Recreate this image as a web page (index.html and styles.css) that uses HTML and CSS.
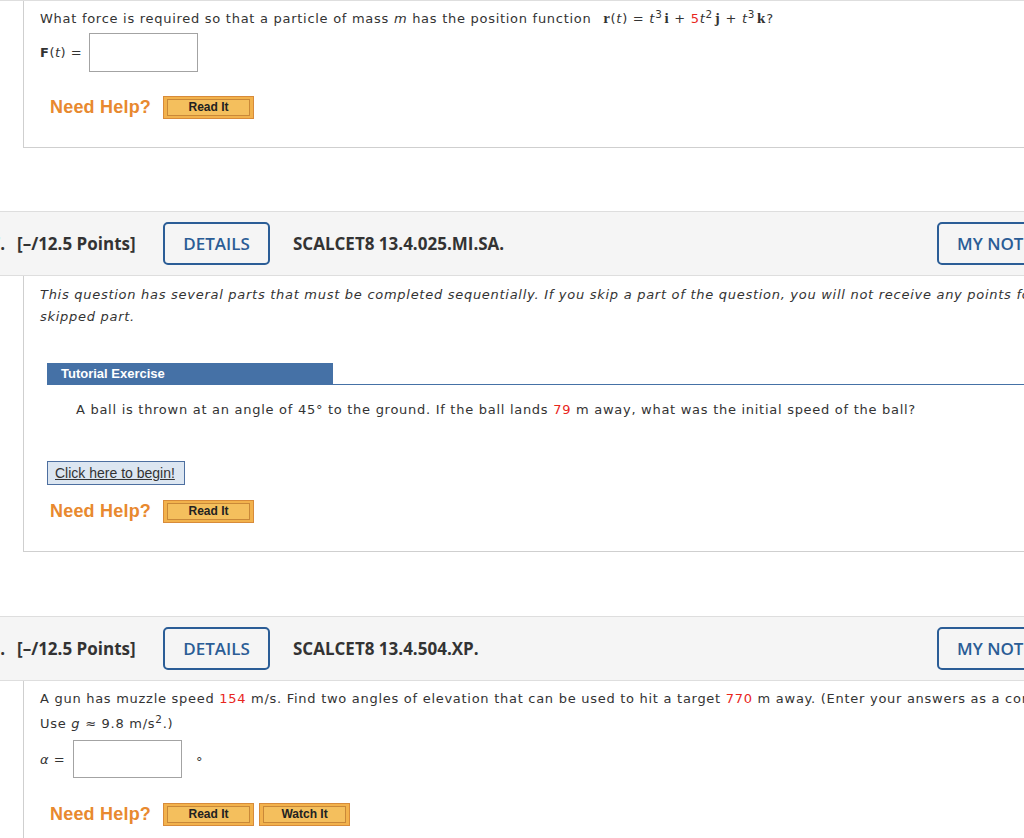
FILE: index.html
```html
<!DOCTYPE html>
<html lang="en">
<head>
  <meta charset="UTF-8">
  <meta name="viewport" content="width=device-width, initial-scale=1.0">
  <title>Assignment</title>
  <link rel="stylesheet" href="styles.css">
</head>
<body>
  <div class="page">
    <div class="prev-edge"></div>

    <div class="qbody first-body">
      <p class="qtext">What force is required so that a particle of mass <i>m</i> has the position function&nbsp; <b class="vec">r</b>(<i>t</i>) = <i>t</i><sup>3</sup><b class="vec">i</b> + <span class="red">5</span><i>t</i><sup>2</sup><b class="vec">j</b> + <i>t</i><sup>3</sup><b class="vec">k</b>?</p>
      <div class="answer-row">
        <span><b>F</b>(<i>t</i>) =</span>
        <input class="answer" type="text">
      </div>
      <div class="help-row">
        <span class="help-label">Need Help?</span>
        <button class="help-btn"><span>Read It</span></button>
      </div>
    </div>

    <div class="qhead">
      <span class="qnum">7.</span>
      <span class="points">[–/12.5 Points]</span>
      <button class="outline-btn details-btn">DETAILS</button>
      <span class="qcode">SCALCET8 13.4.025.MI.SA.</span>
      <button class="outline-btn notes-btn">MY NOTES</button>
    </div>
    <div class="qbody">
      <p class="qtext intro"><i>This question has several parts that must be completed sequentially. If you skip a part of the question, you will not receive any points for the<br>skipped part.</i></p>
      <div class="tut-head">
        <div class="tut-title">Tutorial Exercise</div>
      </div>
      <p class="qtext tut-text">A ball is thrown at an angle of 45° to the ground. If the ball lands <span class="red">79</span> m away, what was the initial speed of the ball?</p>
      <button class="begin-btn">Click here to begin!</button>
      <div class="help-row after-begin">
        <span class="help-label">Need Help?</span>
        <button class="help-btn"><span>Read It</span></button>
      </div>
    </div>

    <div class="qhead last-head">
      <span class="qnum">8.</span>
      <span class="points">[–/12.5 Points]</span>
      <button class="outline-btn details-btn">DETAILS</button>
      <span class="qcode">SCALCET8 13.4.504.XP.</span>
      <button class="outline-btn notes-btn">MY NOTES</button>
    </div>
    <div class="qbody">
      <p class="qtext two-line">A gun has muzzle speed <span class="red">154</span> m/s. Find two angles of elevation that can be used to hit a target <span class="red">770</span> m away. (Enter your answers as a comma-separated list.<br>Use <i>g</i> ≈ 9.8 m/s<sup>2</sup>.)</p>
      <div class="answer-row alpha-row">
        <span><i>α</i> =</span>
        <input class="answer" type="text">
        <span class="unit">°</span>
      </div>
      <div class="help-row after-alpha">
        <span class="help-label">Need Help?</span>
        <button class="help-btn"><span>Read It</span></button>
        <button class="help-btn"><span>Watch It</span></button>
      </div>
    </div>
  </div>
</body>
</html>
```

FILE: styles.css
```css
* {
  box-sizing: border-box;
}
body {
  margin: 0;
  overflow: hidden;
  background: #fff;
  color: #333;
  font-family: "DejaVu Sans", Verdana, sans-serif;
  font-size: 13px;
}
.page {
  width: 1100px;
}
.prev-edge {
  border-bottom: 1px solid #dedede;
}

/* question body */
.qbody {
  margin-left: 23px;
  padding: 0 0 28px 16px;
  border-left: 1px solid #cfcfcf;
  border-bottom: 1px solid #cfcfcf;
}
.qtext {
  margin: 0;
  line-height: 22px;
  letter-spacing: 0.72px;
  white-space: nowrap;
}
.first-body .qtext {
  padding-top: 6px;
}
.vec {
  margin-left: 2px;
  font-family: "Liberation Serif", "Times New Roman", serif;
  font-size: 15px;
}
sup {
  font-size: 0.8em;
  line-height: 0;
  vertical-align: 0.45em;
}
.red {
  color: #e8261c;
}

.answer-row {
  display: flex;
  align-items: center;
  gap: 7px;
  margin-top: 3px;
  letter-spacing: 0.5px;
}
.answer {
  width: 109px;
  height: 39px;
  margin: 0;
  border: 1px solid #a3a3a3;
  background: #fff;
}
.alpha-row {
  margin-top: 4px;
  gap: 8px;
}
.alpha-row .answer {
  height: 38px;
}
.unit {
  margin-left: 6px;
  padding-top: 4px;
}

.help-row {
  display: flex;
  align-items: center;
  gap: 5px;
  margin-top: 24px;
  padding-left: 10px;
}
.help-label {
  margin-right: 7px;
  color: #e8892f;
  font-family: "Liberation Sans", Arial, sans-serif;
  font-size: 18px;
  font-weight: bold;
  letter-spacing: 0.2px;
}
.help-btn {
  width: 91px;
  height: 23px;
  margin: 0;
  padding: 2px 3px;
  border: 1px solid #d88b3a;
  background: #f2b24c;
  cursor: pointer;
}
.help-btn span {
  display: block;
  height: 17px;
  border: 1px solid #c98838;
  background: #f4bf5d;
  color: #222;
  font-family: "Liberation Sans", Arial, sans-serif;
  font-size: 12px;
  font-weight: bold;
  line-height: 15px;
}

/* question header band */
.qhead {
  display: flex;
  align-items: center;
  height: 65px;
  margin-top: 63px;
  padding: 0 13px 0 0;
  border-top: 1px solid #dedede;
  border-bottom: 1px solid #dedede;
  background: #f5f5f5;
  font-family: "Open Sans", "Noto Sans", sans-serif;
  font-size: 17px;
  font-weight: 700;
  color: #333;
}
.last-head {
  margin-top: 64px;
}
.qnum {
  width: 20px;
  margin-left: -15px;
  text-align: right;
}
.points {
  width: 146px;
  margin-left: 12px;
}
.outline-btn {
  height: 43px;
  margin: 0;
  padding: 0 18px;
  border: 2px solid #2b5d96;
  border-radius: 5px;
  background: transparent;
  color: #2b5d96;
  font-family: "Open Sans", "Noto Sans", sans-serif;
  font-size: 17px;
  font-weight: 600;
  cursor: pointer;
}
.details-btn {
  width: 107px;
  padding: 0;
}
.qcode {
  margin-left: 23px;
}
.notes-btn {
  width: 150px;
  margin-left: auto;
  text-align: left;
}

/* tutorial */
.intro {
  padding-top: 8px;
}
.tut-head {
  display: flex;
  margin: 35px 0 0 7px;
  border-bottom: 1px solid #4571a6;
}
.tut-title {
  width: 286px;
  height: 21px;
  padding-left: 14px;
  background: #4571a6;
  color: #fff;
  font-family: "Liberation Sans", Arial, sans-serif;
  font-size: 13px;
  font-weight: bold;
  line-height: 21px;
}
.tut-text {
  margin-top: 14px;
  padding-left: 36px;
}
.begin-btn {
  display: block;
  width: 138px;
  height: 24px;
  margin: 40px 0 0 7px;
  padding: 0 0 0 7px;
  border: 1px solid #4d6fa0;
  background: #dce6f1;
  color: #333;
  font-family: "Liberation Sans", Arial, sans-serif;
  font-size: 14px;
  text-align: left;
  text-decoration: underline;
  cursor: pointer;
}
.after-begin {
  margin-top: 15px;
}

.two-line {
  padding-top: 5px;
  line-height: 25px;
}
.after-alpha {
  margin-top: 25px;
}
```
